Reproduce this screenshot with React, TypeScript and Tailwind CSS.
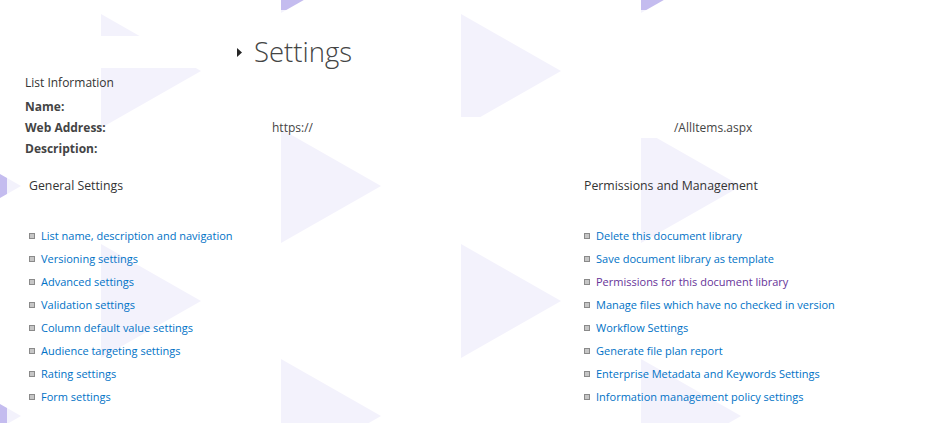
const generalSettings = [
  'List name, description and navigation',
  'Versioning settings',
  'Advanced settings',
  'Validation settings',
  'Column default value settings',
  'Audience targeting settings',
  'Rating settings',
  'Form settings',
];

const permissionSettings = [
  { label: 'Delete this document library' },
  { label: 'Save document library as template' },
  { label: 'Permissions for this document library', visited: true },
  { label: 'Manage files which have no checked in version' },
  { label: 'Workflow Settings' },
  { label: 'Generate file plan report' },
  { label: 'Enterprise Metadata and Keywords Settings' },
  { label: 'Information management policy settings' },
];

function ThemeBackground() {
  // "play" triangles from the site theme image (stops short of the right edge)
  return (
    <svg className="absolute inset-0 h-full w-full" aria-hidden="true">
      <defs>
        <pattern id="tri" x="0" y="0" width="360" height="230" patternUnits="userSpaceOnUse">
          <g fill="#c4bcef">
            <polygon points="101,14 201,71 101,128" />
            <polygon points="281,129 381,186 281,243" />
            <polygon points="-79,129 21,186 -79,243" />
            <polygon points="281,-101 381,-44 281,13" />
            <polygon points="-79,-101 21,-44 -79,13" />
          </g>
        </pattern>
      </defs>
      <rect width="800" height="100%" fill="url(#tri)" />
    </svg>
  );
}

function SettingsLink({ label, visited }: { label: string; visited?: boolean }) {
  return (
    <li className="flex h-[23px] items-center">
      <span className="h-[6px] w-[6px] shrink-0 border border-[#8a8a8a] bg-[#c6c6c6]" />
      <a
        href="#"
        className={`ml-[6px] whitespace-nowrap text-[11px] leading-[23px] ${visited ? 'text-[#663399]' : 'text-[#0072c6]'}`}
      >
        {label}
      </a>
    </li>
  );
}

export default function App() {
  return (
    <div className="relative h-[423px] w-[940px] overflow-hidden bg-white font-['Open_Sans',sans-serif]">
      <ThemeBackground />

      <div className="relative ml-[7px] mt-[10px] h-[413px] bg-white/80 pl-[18px] pt-[26px]">
        {/* breadcrumb */}
        <div className="flex h-[32px] items-center">
          <span className="-ml-[3px] h-[32px] w-[206px] bg-white" />
          <svg width="5" height="9" viewBox="0 0 5 9" className="ml-[9px]">
            <polygon points="0,0 5,4.5 0,9" fill="#262626" />
          </svg>
          <h1 className="ml-[12px] text-[27.5px] font-light leading-[32px] text-[#444]">Settings</h1>
        </div>

        <h2 className="mt-[4px] text-[12px] leading-[21px] text-[#333]">List Information</h2>

        <div className="mt-[3px] grid grid-cols-[247px_1fr] text-[12px] leading-[21px] text-[#444]">
          <div className="font-bold">Name:</div>
          <div />
          <div className="font-bold">Web Address:</div>
          <div className="flex items-center whitespace-nowrap">
            <span>https://</span>
            <span className="h-[21px] w-[361px] bg-white" />
            <span>/AllItems.aspx</span>
          </div>
          <div className="font-bold">Description:</div>
          <div />
        </div>

        <div className="mt-[17px] flex">
          <section className="w-[559px] pl-[4px]">
            <h3 className="text-[12.3px] leading-[20px] text-[#333]">General Settings</h3>
            <ul className="mt-[28px]">
              {generalSettings.map((s) => (
                <SettingsLink key={s} label={s} />
              ))}
            </ul>
          </section>
          <section>
            <h3 className="text-[12.3px] leading-[20px] text-[#333]">Permissions and Management</h3>
            <ul className="mt-[28px]">
              {permissionSettings.map((s) => (
                <SettingsLink key={s.label} label={s.label} visited={s.visited} />
              ))}
            </ul>
          </section>
        </div>
      </div>
    </div>
  );
}
